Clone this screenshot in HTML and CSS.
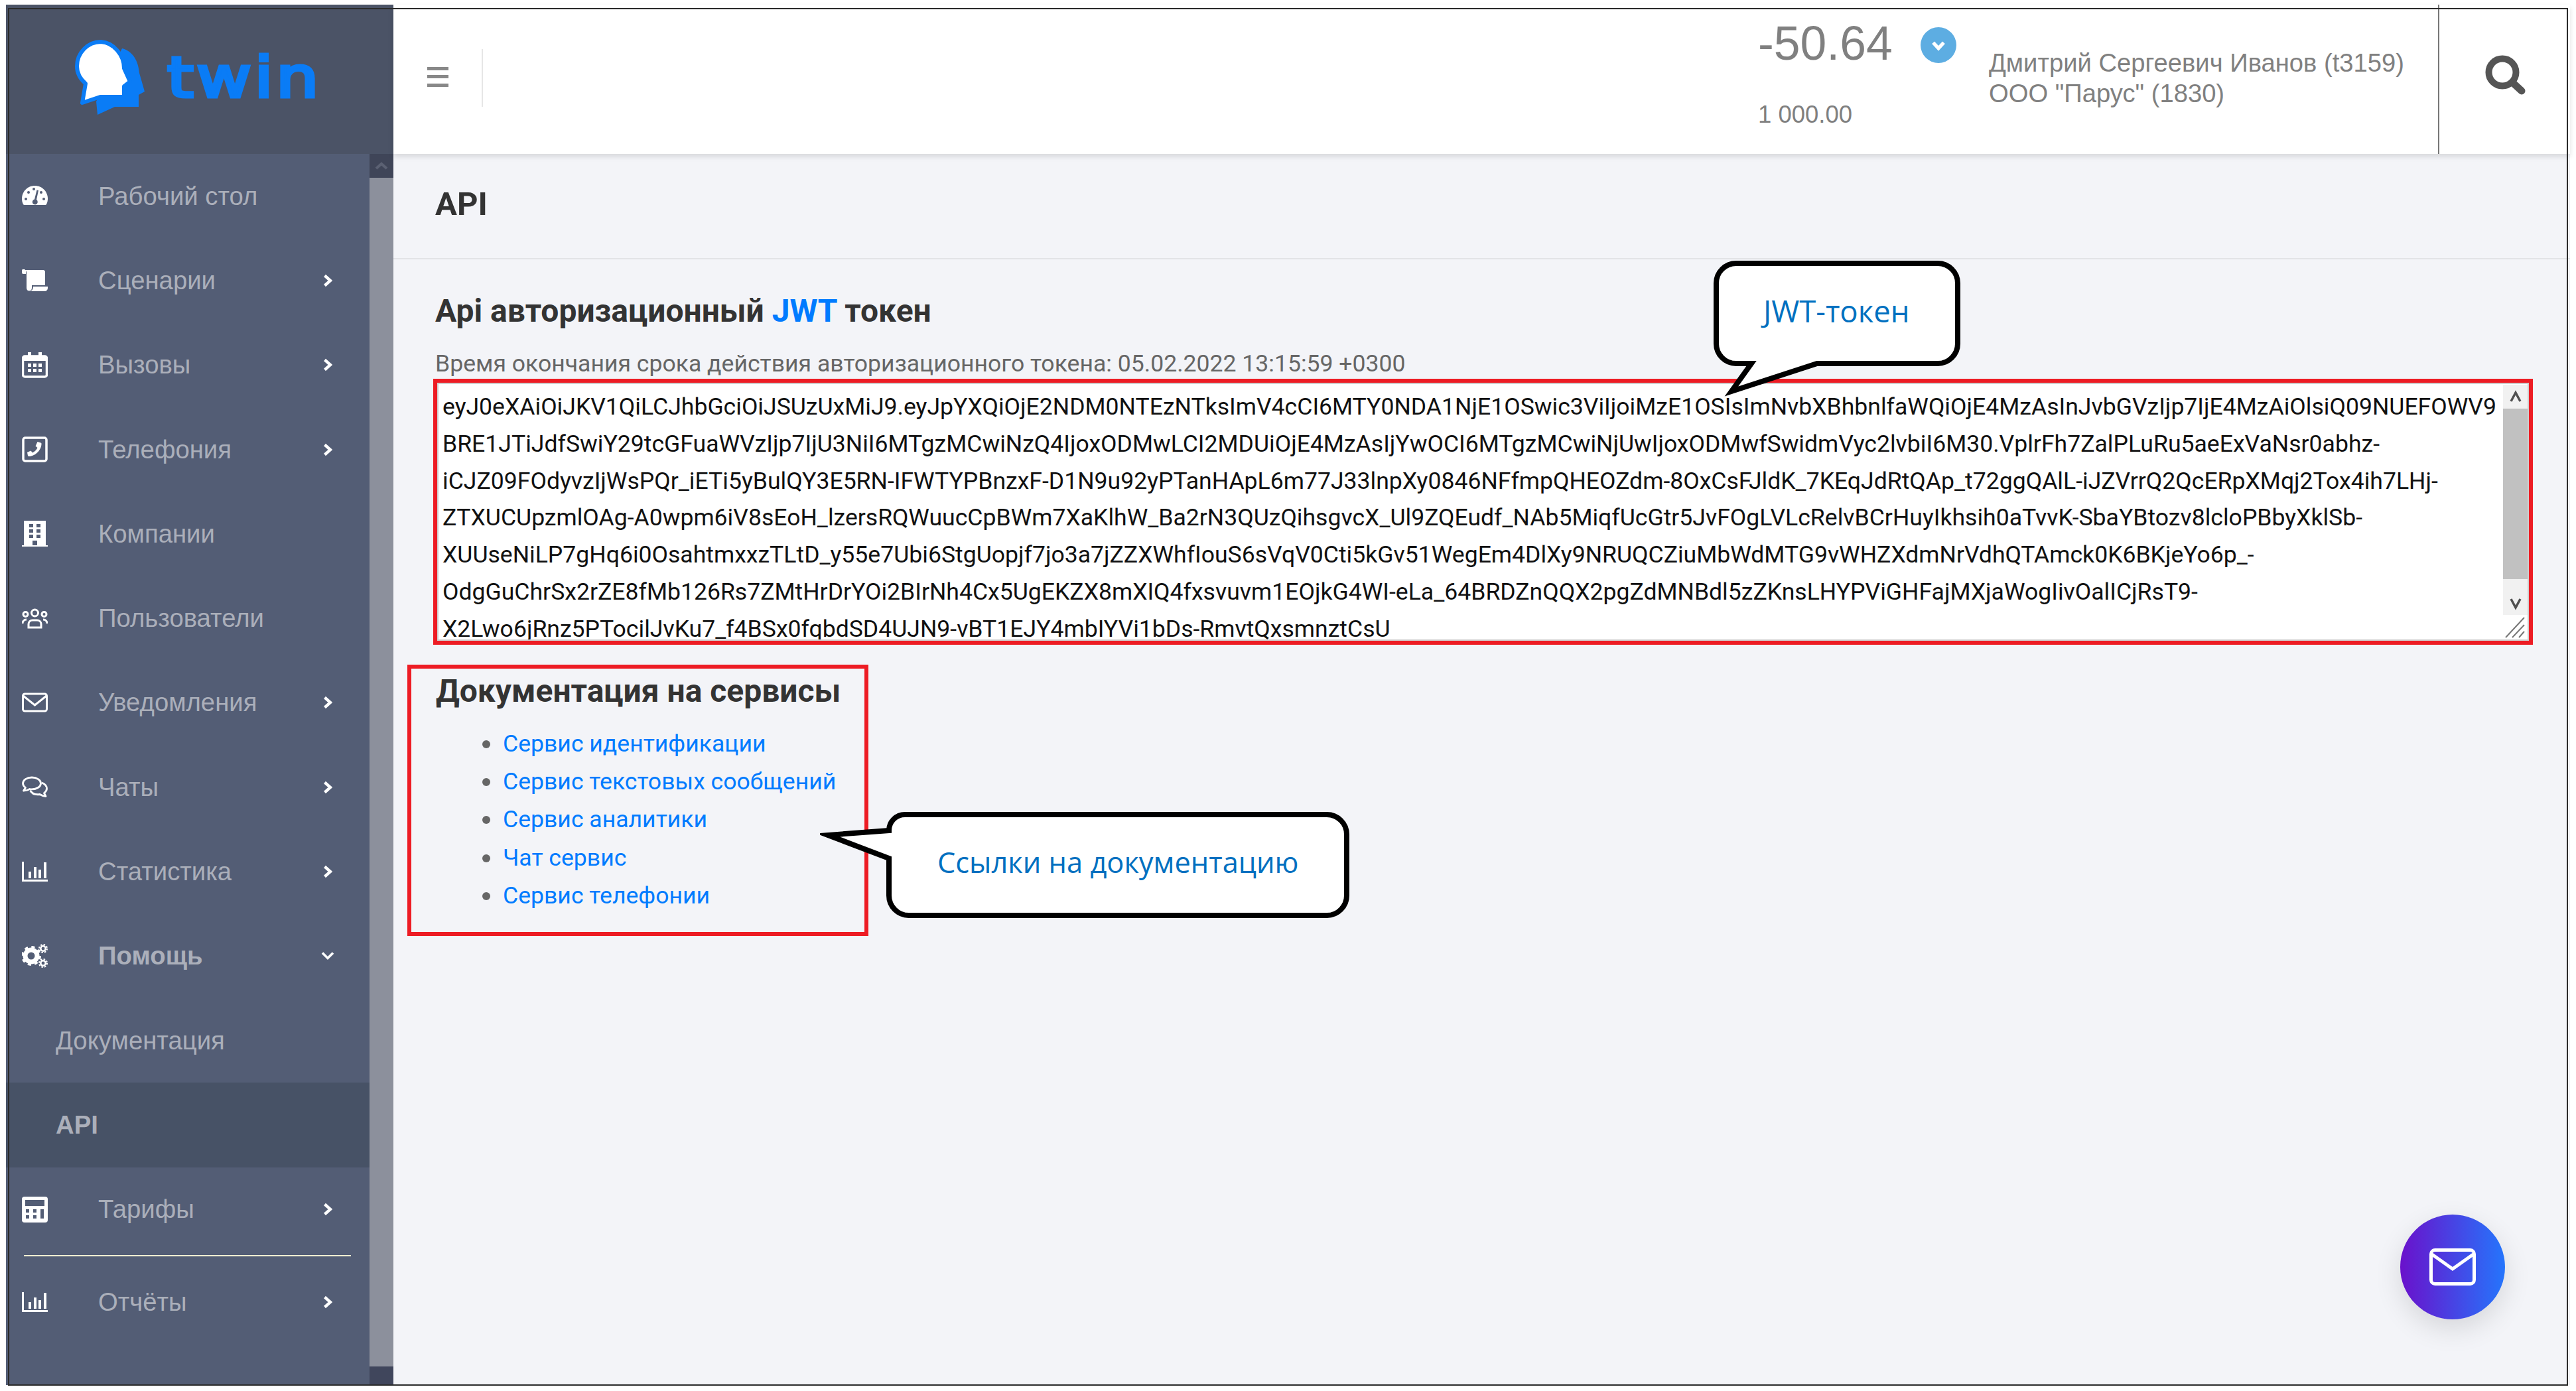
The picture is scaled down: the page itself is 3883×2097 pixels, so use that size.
FILE: index.html
```html
<!DOCTYPE html>
<html lang="ru">
<head>
<meta charset="utf-8">
<title>API</title>
<link rel="stylesheet" href="styles.css">
</head>
<body>
<svg class="defs" width="0" height="0">
  <symbol id="chev" viewBox="0 0 14 20"><polyline points="2.5,2.5 11,10 2.5,17.5" fill="none" stroke="#fff" stroke-width="4.4"/></symbol>
  <symbol id="chart" viewBox="0 0 39 30"><path d="M1.5 0V28.5H39" fill="none" stroke="#fff" stroke-width="3"/><path fill="#fff" d="M10 15h4v10h-4zM18 8h4v17h-4zM25 12h4v13h-4zM33 1h4v24h-4z"/></symbol>
</svg>
<div class="app">
  <aside class="sidebar">
    <div class="logo">
      <svg class="logo-head" viewBox="0 0 110 118" width="110" height="118">
        <path fill="#0a7cf6" d="M74 16C94 21 99 41 100 53L108 81L99 86V104H63L37 116L35 96Z"/>
        <path fill="#fff" stroke="#0a7cf6" stroke-width="6" stroke-linejoin="round" d="M41 89H77V73L86 66L77 46C77 26 61 7 42 6C22 6 6 23 6 43C6 54 11 62 19 69L14 98Z"/>
      </svg>
      <span class="logo-word">twin</span>
    </div>
    <div class="side-body">
      <nav class="menu">
        <a class="item"><span class="ico"><svg viewBox="0 0 39 39" width="39" height="39"><path fill="#fff" d="M19.5 4C8.7 4 0 12.7 0 23.5c0 3 .7 6 2 8.5.4.6 1 1 1.7 1h31.6c.7 0 1.3-.4 1.7-1 1.3-2.5 2-5.5 2-8.5C39 12.7 30.3 4 19.5 4z"/><g fill="#535d75"><circle cx="6" cy="24" r="2"/><circle cx="10" cy="14" r="2"/><circle cx="18" cy="9" r="2"/><circle cx="29" cy="14" r="2"/><circle cx="33" cy="24" r="2"/><path d="M22.5 10.500l2.500.6-3 14a4 4 0 1 1-3-.6z"/></g></svg></span><span class="label">Рабочий стол</span></a>
        <a class="item"><span class="ico"><svg viewBox="0 0 39 39" width="39" height="39"><path fill="#fff" d="M2 4h30c2 0 3 1.500 3 3v20H15v4c0 3-2 4.500-4 4.500S7 34 7 31V8c0-2-1-3-2-3H2zM0 4.500C0 3 1 3 3 3c2.500 0 3 2 3 3v4H2c-1 0-2-1-2-2zM17 29h22v2c0 3-2 5-5 5H13c2-1 4-3 4-7z"/></svg></span><span class="label">Сценарии</span><svg class="chev"><use href="#chev"/></svg></a>
        <a class="item"><span class="ico"><svg viewBox="0 0 39 39" width="39" height="39"><rect x="1.500" y="6" width="36" height="31" rx="3" fill="none" stroke="#fff" stroke-width="3.500"/><path fill="#fff" d="M1 6h37v7H1zM9 0h5v7H9zM25 0h5v7h-5zM9 17h5v5H9zM17 17h5v5h-5zM25 17h5v5h-5zM9 25h5v5H9zM17 25h5v5h-5zM25 25h5v5h-5z"/></svg></span><span class="label">Вызовы</span><svg class="chev"><use href="#chev"/></svg></a>
        <a class="item"><span class="ico"><svg viewBox="0 0 39 39" width="39" height="39"><rect x="2" y="2" width="35" height="35" rx="3" fill="none" stroke="#fff" stroke-width="3.500"/><path fill="#fff" d="M23.500 8l5 1.500c.6.200 1 .8 1 1.500C29.500 20.500 20 30 10.500 30c-.7 0-1.200-.4-1.500-1l-1-5 5.500-2.500 2.500 3c3.500-1.700 6-4.500 7.500-7.500l-3-2.500z"/></svg></span><span class="label">Телефония</span><svg class="chev"><use href="#chev"/></svg></a>
        <a class="item"><span class="ico"><svg viewBox="0 0 39 39" width="39" height="39"><path fill="#fff" d="M3 0h33v37h3v2H0v-2h3z"/><path fill="#535d75" d="M11 5h6v5h-6zM22 5h6v5h-6zM11 13h6v5h-6zM22 13h6v5h-6zM11 21h6v5h-6zM22 21h6v5h-6zM16 30h7v7h-7z"/></svg></span><span class="label">Компании</span></a>
        <a class="item"><span class="ico"><svg viewBox="0 0 39 39" width="39" height="39"><g fill="none" stroke="#fff" stroke-width="3"><circle cx="19.500" cy="11" r="5"/><circle cx="5.500" cy="13" r="3.500"/><circle cx="33.500" cy="13" r="3.500"/><path d="M10 33v-5c0-4 3-6 6-6h7c3 0 6 2 6 6v5z"/><path d="M1 27c0-3 2-6 6-6M38 27c0-3-2-6-6-6"/></g></svg></span><span class="label">Пользователи</span></a>
        <a class="item"><span class="ico"><svg viewBox="0 0 39 39" width="39" height="39"><rect x="1.500" y="6" width="36" height="26" rx="3" fill="none" stroke="#fff" stroke-width="3"/><path d="M2 9l17.500 14L37 9" fill="none" stroke="#fff" stroke-width="3"/></svg></span><span class="label">Уведомления</span><svg class="chev"><use href="#chev"/></svg></a>
        <a class="item"><span class="ico"><svg viewBox="0 0 39 39" width="39" height="39"><g fill="none" stroke="#fff" stroke-width="2.800" stroke-linejoin="round"><path d="M15 5C7.500 5 1.500 9 1.500 14c0 3 2 5 4 6.500L2.500 25c4 0 7-1 9-2.500 1 .2 2.500.4 3.500.4 7.500 0 13.500-4 13.500-9S22.500 5 15 5z"/><path d="M30 13c4 1.500 7.500 4.500 7.500 9 0 3-2 5-4 6.500l2.500 5c-4 0-6.500-1.500-9-3-7 1-12-1-14.500-6"/></g></svg></span><span class="label">Чаты</span><svg class="chev"><use href="#chev"/></svg></a>
        <a class="item"><span class="ico ico-chart"><svg width="39" height="30"><use href="#chart"/></svg></span><span class="label">Статистика</span><svg class="chev"><use href="#chev"/></svg></a>
        <a class="item item-open"><span class="ico"><svg viewBox="0 0 39 39" width="39" height="39"><circle cx="14" cy="19" r="9" fill="none" stroke="#fff" stroke-width="7"/><circle cx="14" cy="19" r="13" fill="none" stroke="#fff" stroke-width="4" stroke-dasharray="5 5.200"/><circle cx="32" cy="8" r="3.700" fill="none" stroke="#fff" stroke-width="2.500"/><circle cx="32" cy="8" r="6" fill="none" stroke="#fff" stroke-width="2" stroke-dasharray="2.500 2.200"/><circle cx="32" cy="30" r="3.700" fill="none" stroke="#fff" stroke-width="2.500"/><circle cx="32" cy="30" r="6" fill="none" stroke="#fff" stroke-width="2" stroke-dasharray="2.500 2.200"/></svg></span><span class="label">Помощь</span><svg class="chev-down" viewBox="0 0 20 14" width="20" height="14"><polyline points="2,2.500 10,10.500 18,2.500" fill="none" stroke="#fff" stroke-width="3.600"/></svg></a>
        <a class="item sub">Документация</a>
        <a class="item sub sub-active">API</a>
        <a class="item"><span class="ico"><svg viewBox="0 0 39 39" width="39" height="39"><rect width="39" height="39" rx="4" fill="#fff"/><path fill="#535d75" d="M5 5h29v9H5zM6 19h5v5H6zM17 19h5v5h-5zM28 19h5v14h-5zM6 28h5v5H6zM17 28h5v5h-5z"/></svg></span><span class="label">Тарифы</span><svg class="chev"><use href="#chev"/></svg></a>
        <div class="menu-sep"></div>
        <a class="item"><span class="ico ico-chart"><svg width="39" height="30"><use href="#chart"/></svg></span><span class="label">Отчёты</span><svg class="chev"><use href="#chev"/></svg></a>
      </nav>
      <div class="side-track">
        <div class="track-up"><svg viewBox="0 0 20 12" width="20" height="12"><polyline points="2,10 10,3 18,10" fill="none" stroke="#5b6173" stroke-width="4"/></svg></div>
        <div class="track-down"></div>
      </div>
    </div>
  </aside>
  <main class="main">
    <header class="topbar">
      <svg class="burger" viewBox="0 0 32 30" width="32" height="30"><path fill="#888" d="M0 0h32v5H0zM0 12h32v5H0zM0 25h32v5H0z"/></svg>
      <div class="top-sep"></div>
      <div class="balance">
        <div class="amount-row"><span class="amount">-50.64</span><svg class="ball" viewBox="0 0 51 51" width="54" height="54"><circle cx="25.500" cy="25.500" r="25.500" fill="#5dade2"/><polyline points="18,22 25.500,30 33,22" fill="none" stroke="#fff" stroke-width="5"/></svg></div>
        <div class="limit">1 000.00</div>
      </div>
      <div class="user">Дмитрий Сергеевич Иванов (t3159)<br>ООО "Парус" (1830)</div>
      <div class="search"><svg viewBox="0 0 61 60" width="61" height="60"><circle cx="26" cy="26" r="20.500" fill="none" stroke="#555" stroke-width="10"/><line x1="42" y1="42" x2="55" y2="54" stroke="#555" stroke-width="11" stroke-linecap="round"/></svg></div>
    </header>
    <div class="title-bar"><h1 class="page-title">API</h1></div>
    <section class="content">
      <h2 class="token-title">Api авторизационный <span class="hl">JWT</span> токен</h2>
      <p class="expiry">Время окончания срока действия авторизационного токена: 05.02.2022 13:15:59 +0300</p>
      <div class="red-box token-box">
        <div class="token-area">
          <div class="token-text">
            <div>eyJ0eXAiOiJKV1QiLCJhbGciOiJSUzUxMiJ9.eyJpYXQiOjE2NDM0NTEzNTksImV4cCI6MTY0NDA1NjE1OSwic3ViIjoiMzE1OSIsImNvbXBhbnlfaWQiOjE4MzAsInJvbGVzIjp7IjE4MzAiOlsiQ09NUEFOWV9</div>
            <div>BRE1JTiJdfSwiY29tcGFuaWVzIjp7IjU3NiI6MTgzMCwiNzQ4IjoxODMwLCI2MDUiOjE4MzAsIjYwOCI6MTgzMCwiNjUwIjoxODMwfSwidmVyc2lvbiI6M30.VplrFh7ZalPLuRu5aeExVaNsr0abhz-</div>
            <div>iCJZ09FOdyvzIjWsPQr_iETi5yBulQY3E5RN-IFWTYPBnzxF-D1N9u92yPTanHApL6m77J33lnpXy0846NFfmpQHEOZdm-8OxCsFJldK_7KEqJdRtQAp_t72ggQAlL-iJZVrrQ2QcERpXMqj2Tox4ih7LHj-</div>
            <div>ZTXUCUpzmlOAg-A0wpm6iV8sEoH_lzersRQWuucCpBWm7XaKlhW_Ba2rN3QUzQihsgvcX_Ul9ZQEudf_NAb5MiqfUcGtr5JvFOgLVLcRelvBCrHuyIkhsih0aTvvK-SbaYBtozv8lcloPBbyXklSb-</div>
            <div>XUUseNiLP7gHq6i0OsahtmxxzTLtD_y55e7Ubi6StgUopjf7jo3a7jZZXWhfIouS6sVqV0Cti5kGv51WegEm4DlXy9NRUQCZiuMbWdMTG9vWHZXdmNrVdhQTAmck0K6BKjeYo6p_-</div>
            <div>OdgGuChrSx2rZE8fMb126Rs7ZMtHrDrYOi2BIrNh4Cx5UgEKZX8mXIQ4fxsvuvm1EOjkG4WI-eLa_64BRDZnQQX2pgZdMNBdl5zZKnsLHYPViGHFajMXjaWogIivOalICjRsT9-</div>
            <div>X2Lwo6jRnz5PTocilJvKu7_f4BSx0fqbdSD4UJN9-vBT1EJY4mbIYVi1bDs-RmvtQxsmnztCsU</div>
          </div>
          <div class="ta-scroll">
            <svg class="ta-arrow" viewBox="0 0 20 24" width="20" height="24"><polyline points="3,19 10,6 17,19" fill="none" stroke="#505050" stroke-width="3.500"/></svg>
            <div class="ta-thumb"></div>
            <svg class="ta-arrow ta-arrow-end" viewBox="0 0 20 24" width="20" height="24"><polyline points="3,5 10,18 17,5" fill="none" stroke="#505050" stroke-width="3.500"/></svg>
          </div>
          <svg class="ta-resize" viewBox="0 0 30 32" width="30" height="32"><path d="M1 31L29 1M11 31L29 12M21 31L29 22" stroke="#777" stroke-width="2" fill="none"/></svg>
        </div>
      </div>
      <div class="red-box docs-box">
        <h2 class="docs-title">Документация на сервисы</h2>
        <ul class="docs-list">
          <li><a>Сервис идентификации</a></li>
          <li><a>Сервис текстовых сообщений</a></li>
          <li><a>Сервис аналитики</a></li>
          <li><a>Чат сервис</a></li>
          <li><a>Сервис телефонии</a></li>
        </ul>
      </div>
    </section>
  </main>
  <div class="callout callout-jwt">
    <svg viewBox="0 0 372 207" width="372" height="207"><path fill="#fff" stroke="#000" stroke-width="8" stroke-miterlimit="10" d="M34 4H338a30 30 0 0 1 30 30V125a30 30 0 0 1-30 30H156L27 197L57 155H34a30 30 0 0 1-30-30V34a30 30 0 0 1 30-30Z"/></svg>
    <span class="callout-text">JWT-токен</span>
  </div>
  <div class="callout callout-docs">
    <svg viewBox="0 0 797 160" width="799" height="160"><path fill="#fff" stroke="#000" stroke-width="8" stroke-miterlimit="10" d="M127 4H763a30 30 0 0 1 30 30V126a30 30 0 0 1-30 30H133a30 30 0 0 1-30-30V70L11 35L103 28a24 24 0 0 1 24-24Z"/></svg>
    <span class="callout-text">Ссылки на документацию</span>
  </div>
  <div class="fab"><svg viewBox="0 0 70 56" width="70" height="56"><rect x="2.500" y="2.500" width="65" height="51" rx="6" fill="none" stroke="#fff" stroke-width="5"/><path d="M4 9l31 22 31-22" fill="none" stroke="#fff" stroke-width="5"/></svg></div>
  <div class="frame"></div>
</div>
</body>
</html>
```
FILE: styles.css
```css
html, body { margin: 0; padding: 0; background: #fff; }
body { width: 3883px; height: 2097px; overflow: hidden; font-family: "Liberation Sans", Arial, sans-serif; }
.defs { position: absolute; }
.app { position: relative; display: flex; width: 3865px; height: 2081px; margin: 7px 0 0 9px; }
.frame { position: absolute; left: 3px; top: 5px; width: 3855px; height: 2073px; border: 2px solid #2b2b2b; pointer-events: none; }

.sidebar { width: 584px; flex: none; display: flex; flex-direction: column; background: #535d75; }
.logo { height: 225px; flex: none; display: flex; align-items: flex-start; background: #4b5366; padding: 50px 0 0 101px; box-sizing: border-box; position: relative; }
.logo-word { font-family: "DejaVu Sans", sans-serif; font-weight: 400; font-size: 84px; line-height: 92px; letter-spacing: 4px; color: #0a7cf6; -webkit-text-stroke: 5px #0a7cf6; margin: 14px 0 0 32px; transform: scaleX(1.2); transform-origin: left center; }
.side-body { flex: 1; display: flex; min-height: 0; }
.menu { width: 548px; flex: none; }
.side-track { width: 36px; flex: none; display: flex; flex-direction: column; justify-content: space-between; background: #8c909c; }
.track-up { height: 36px; background: #3f4558; display: flex; align-items: center; justify-content: center; }
.track-down { height: 28px; background: #40465c; }

.item { height: 127.3px; display: flex; align-items: center; box-sizing: border-box; padding-left: 24px; font-size: 38.3px; color: #abafba; position: relative; }
.ico { width: 39px; height: 39px; flex: none; display: flex; align-items: center; margin-right: 76px; }
.label { flex: 1; }
.chev { width: 14px; height: 20px; flex: none; margin-right: 56px; }
.chev-down { flex: none; margin-right: 53px; }
.item-open { font-weight: 700; }
.sub { padding-left: 75px; }
.sub-active { background: #475266; font-weight: 700; }
.menu-sep { height: 2px; margin: 5px 28px 5px 27px; background: #f3efd2; }

.main { flex: 1; display: flex; flex-direction: column; background: #f3f4f8; min-width: 0; }
.topbar { height: 225px; flex: none; display: flex; align-items: flex-start; background: #fff; box-shadow: 0 4px 8px rgba(0,0,0,.12); position: relative; color: #808080; }
.burger { margin: 94px 0 0 51px; flex: none; }
.top-sep { width: 2px; height: 87px; margin: 67px 0 0 50px; background: #e6e6e6; flex: none; }
.balance { margin-left: 1922px; width: 348px; flex: none; }
.amount-row { display: flex; align-items: flex-start; height: 130px; }
.amount { font-size: 71.5px; line-height: 70px; margin-top: 23px; }
.ball { margin: 34px 0 0 42px; }
.limit { font-size: 36.5px; line-height: 42px; margin-top: 15px; }
.user { font-size: 38.2px; line-height: 46px; margin-top: 65px; width: 677px; flex: none; white-space: nowrap; }
.search { width: 194px; height: 225px; flex: none; box-sizing: border-box; border-left: 2px solid #777; padding: 76px 0 0 69px; }

.title-bar { height: 159px; flex: none; box-sizing: border-box; border-bottom: 2px solid #e2e3e6; padding: 0 0 6px 63px; display: flex; align-items: center; }
.page-title { margin: 0; font-family: Roboto, sans-serif; font-weight: 700; font-size: 49px; color: #333; }
.content { flex: 1; padding: 0 0 0 21px; font-family: Roboto, sans-serif; }
.token-title { margin: 50px 0 0 42px; font-size: 48px; line-height: 56px; font-weight: 700; color: #333; }
.hl { color: #007bff; }
.expiry { margin: 29px 0 0 42px; font-size: 35.6px; line-height: 44px; color: #666; }
.red-box { border: 6px solid #ed1c24; box-sizing: border-box; }
.token-box { width: 3165px; height: 401px; margin: 1px 0 0 39px; overflow: hidden; }
.token-area { position: relative; height: 100%; background: #fff; border: 2px solid #cfcfcf; box-sizing: border-box; overflow: hidden; }
.token-text { padding: 7px 0 0 6px; font-size: 35.6px; line-height: 55.8px; color: #111; white-space: nowrap; }
.ta-scroll { position: absolute; right: 0; top: 1px; width: 37px; height: 347px; background: #f1f1f1; display: flex; flex-direction: column; align-items: center; }
.ta-arrow { flex: none; margin: 6px 0; }
.ta-arrow-end { margin: auto 0 5px; }
.ta-thumb { width: 100%; height: 257px; background: #c1c1c1; flex: none; }
.ta-resize { position: absolute; right: 4px; bottom: 2px; }
.docs-box { width: 695px; height: 409px; margin: 30px 0 0 0; padding-left: 37px; }
.docs-title { margin: 0; padding-top: 7px; font-size: 48px; line-height: 54px; font-weight: 700; color: #333; white-space: nowrap; }
.docs-list { list-style: none; margin: 24px 0 0; padding: 0 0 0 101px; font-size: 35.6px; line-height: 57.2px; }
.docs-list li { position: relative; }
.docs-list li::before { content: ""; position: absolute; left: -31px; top: 23px; width: 12px; height: 12px; border-radius: 50%; background: #666; }
.docs-list a { color: #007bff; white-space: nowrap; }

.callout { position: absolute; }
.callout svg { display: block; }
.callout-text { position: absolute; font-family: "Open Sans", sans-serif; font-size: 44px; line-height: 60px; color: #0070c0; white-space: nowrap; }
.callout-jwt { left: 2574px; top: 386px; }
.callout-jwt .callout-text { left: 75px; top: 45px; font-size: 45.5px; }
.callout-docs { left: 1227px; top: 1217px; }
.callout-docs .callout-text { left: 177px; top: 46px; font-size: 43.4px; }
.fab { position: absolute; left: 3609px; top: 1824px; width: 158px; height: 158px; border-radius: 50%; background: linear-gradient(90deg, #6a11cb, #2575fc); box-shadow: 0 14px 40px rgba(0,0,0,.12); display: flex; align-items: center; justify-content: center; }
```
